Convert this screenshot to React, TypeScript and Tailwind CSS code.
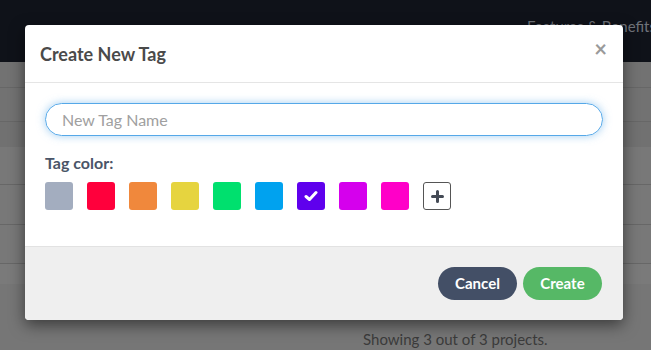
import React from "react";

const colors = [
  "bg-[#a3adbf]",
  "bg-[#ff003c]",
  "bg-[#f0883c]",
  "bg-[#e6d43f]",
  "bg-[#00e06e]",
  "bg-[#00a2ef]",
  "bg-[#5f00ed]",
  "bg-[#d500ed]",
  "bg-[#ff00c8]",
];

export default function App() {
  return (
    <div
      className="relative w-[651px] h-[350px] overflow-hidden bg-[#767676]"
      style={{ fontFamily: "Lato, 'Open Sans', sans-serif" }}
    >
      {/* background page (dimmed) */}
      <div className="h-[62px] bg-[#0f1219] flex justify-end overflow-hidden">
        <div className="pt-[15px] text-[15px] text-[#6f737a] whitespace-nowrap w-[124px] overflow-hidden">
          Features &amp; Benefits
        </div>
      </div>
      <div className="flex flex-col">
        <div className="h-[26px] bg-[#727272] border-b border-[#676767]" />
        <div className="h-[34px] bg-[#727272] border-b border-[#676767]" />
        <div className="h-[25px] bg-[#717171]" />
        <div className="h-[38px] bg-[#787878] border-b border-[#676767]" />
        <div className="h-[40px] bg-[#787878] border-b border-[#676767]" />
        <div className="h-[39px] bg-[#787878] border-b border-[#676767]" />
        <div className="h-[20px] bg-[#7a7a7a]" />
        <div className="flex-1 pt-[44px] pl-[363px] text-[15px] text-[#3b3b3b] whitespace-nowrap">
          Showing 3 out of 3 projects.
        </div>
      </div>

      {/* modal */}
      <div className="absolute left-[25px] top-[25px] w-[598px] h-[295px] bg-white rounded-[4px] shadow-[0_5px_15px_rgba(0,0,0,0.5)] overflow-hidden flex flex-col">
        <div className="h-[58px] shrink-0 flex items-center justify-between pl-[15px] pr-[16px] border-b border-[#e5e5e5]">
          <div className="text-[18px] font-bold text-[#4a4a4a] pt-[1px]">Create New Tag</div>
          <div className="text-[22px] font-bold leading-none text-[#9a9a9a] -mt-[10px]">×</div>
        </div>
        <div className="flex-1 px-[20px] pt-[20px]">
          <div className="h-[33px] rounded-full border border-[#55a8e8] shadow-[0_0_8px_rgba(102,175,233,0.6)] flex items-center pl-[16px]">
            <span className="text-[16px] text-[#a0a0a0]">New Tag Name</span>
          </div>
          <div className="mt-[17px] text-[16px] font-bold text-[#4a5568] leading-[20px]">Tag color:</div>
          <div className="mt-[9px] flex gap-[14px]">
            {colors.map((c, i) => (
              <div key={i} className={`w-[28px] h-[28px] rounded-[3px] flex items-center justify-center ${c}`}>
                {i === 6 && (
                  <svg width="14" height="12" viewBox="0 0 14 12">
                    <path d="M2 6.5 L5.5 9.5 L12 2.5" stroke="white" strokeWidth="3" fill="none" strokeLinecap="round" strokeLinejoin="round" />
                  </svg>
                )}
              </div>
            ))}
            <div className="w-[28px] h-[28px] rounded-[3px] border border-[#555] flex items-center justify-center">
              <svg width="13" height="13" viewBox="0 0 13 13">
                <path d="M6.5 1.5 V11.5 M1.5 6.5 H11.5" stroke="#444a55" strokeWidth="3" strokeLinecap="round" />
              </svg>
            </div>
          </div>
        </div>
        <div className="h-[74px] shrink-0 bg-[#efefef] border-t border-[#e2e2e2] flex items-center justify-end gap-[6px] pr-[21px]">
          <button className="w-[79px] h-[33px] rounded-full bg-[#434f66] text-white text-[15px] font-bold">Cancel</button>
          <button className="w-[79px] h-[33px] rounded-full bg-[#56b866] text-white text-[15px] font-bold">Create</button>
        </div>
      </div>
    </div>
  );
}
